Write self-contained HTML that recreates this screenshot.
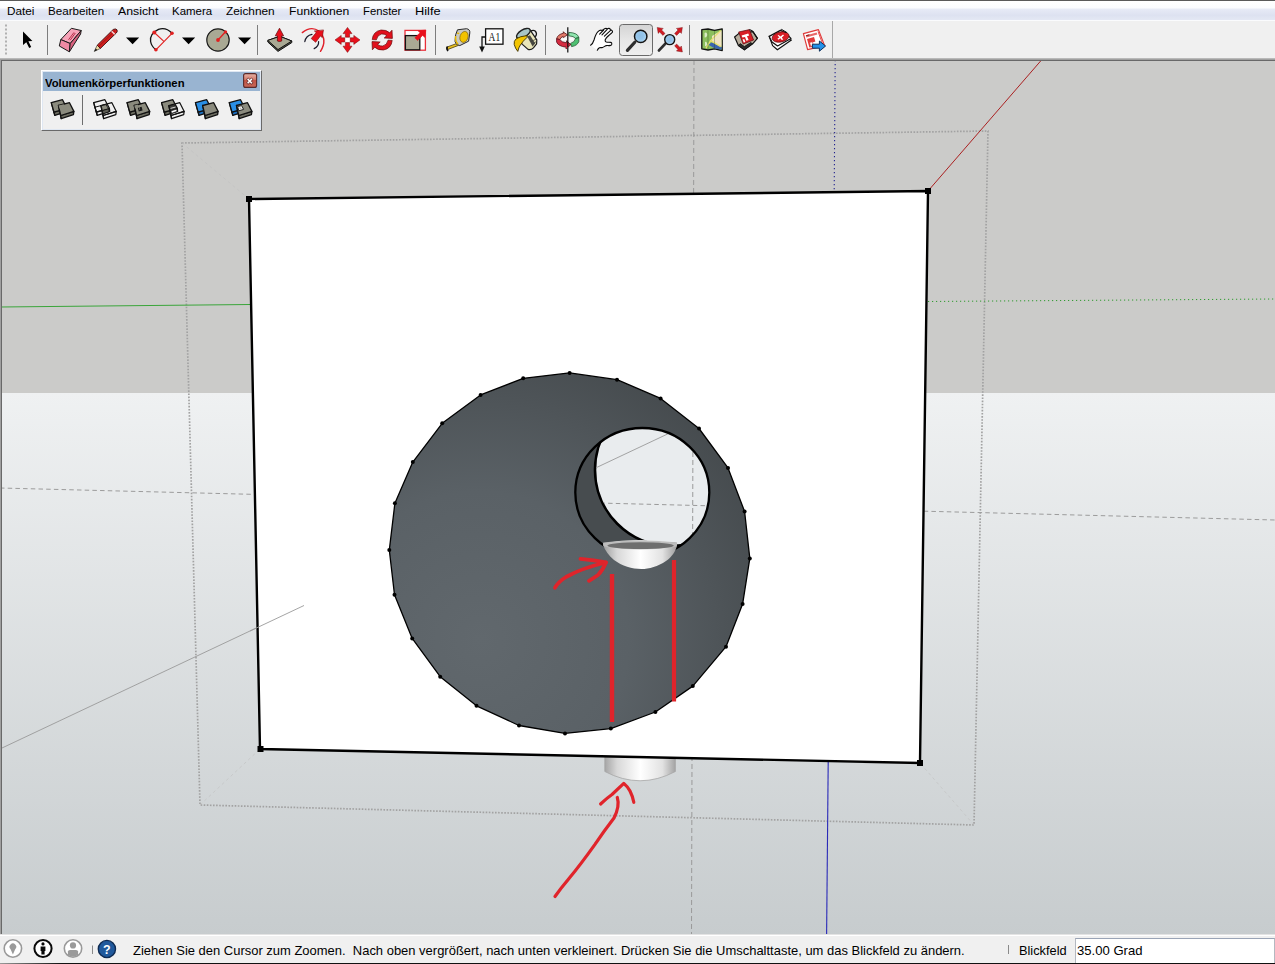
<!DOCTYPE html>
<html lang="de">
<head>
<meta charset="utf-8">
<title>SketchUp</title>
<style>
html,body{margin:0;padding:0;}
body{width:1275px;height:964px;overflow:hidden;position:relative;background:#f0f0f0;font-family:"Liberation Sans",sans-serif;font-size:12px;color:#000;}
.abs{position:absolute;}
#topline{left:0;top:0;width:1275px;height:1px;background:#5a5a5a;}
#menubar{left:0;top:1px;width:1275px;height:19px;background:linear-gradient(#ffffff 0,#fbfcfe 35%,#e6eaf6 45%,#dde2f1 75%,#e4e8f4 100%);}
#menubar span{position:absolute;top:3.4px;font-size:11.5px;line-height:14px;white-space:nowrap;color:#000;display:inline-block;transform-origin:0 0;}
#menuline{left:0;top:20px;width:1275px;height:1px;background:#fafbfd;}
#toolbar{left:0;top:21px;width:1275px;height:36px;background:#f0f0f0;}
#tbshadow{left:0;top:58px;width:1275px;height:3px;background:linear-gradient(#b9b9b9 0,#b9b9b9 33%,#a0a0a0 33%,#a0a0a0 66%,#696969 66%);}
#canvas{left:0;top:61px;width:1275px;height:873px;}
#statusbar{left:0;top:935px;width:1275px;height:28px;background:#f0f0f0;}
#statusbar .t{position:absolute;top:7.8px;font-size:13px;line-height:15px;white-space:pre;transform-origin:0 0;display:inline-block;}
</style>
</head>
<body>
<div id="topline" class="abs"></div>
<div id="menubar" class="abs">
<span id="m1" style="left:6.8px;transform:scaleX(1.0201);">Datei</span>
<span id="m2" style="left:47.8px;transform:scaleX(1.0102);">Bearbeiten</span>
<span id="m3" style="left:117.9px;transform:scaleX(1.0710);">Ansicht</span>
<span id="m4" style="left:172.2px;transform:scaleX(0.9955);">Kamera</span>
<span id="m5" style="left:226.2px;transform:scaleX(1.0294);">Zeichnen</span>
<span id="m6" style="left:288.8px;transform:scaleX(1.0578);">Funktionen</span>
<span id="m7" style="left:362.9px;transform:scaleX(0.9846);">Fenster</span>
<span id="m8" style="left:415.2px;transform:scaleX(1.1121);">Hilfe</span>
</div>
<div id="menuline" class="abs"></div>
<div class="abs" style="left:0;top:21px;width:1275px;height:37px;background:#f0f0f0"></div>
<div id="toolbar" class="abs" style="top:20px;height:40px;background:none">
<!--TB1-->
<svg class="abs" style="left:0;top:0" width="1275" height="40" viewBox="0 20 1275 40">
<defs>
<linearGradient id="zb" x1="0" y1="0" x2="0" y2="1"><stop offset="0" stop-color="#d4d4d4"/><stop offset="0.5" stop-color="#e6e6e6"/><stop offset="1" stop-color="#efefef"/></linearGradient>
<radialGradient id="lens" cx="0.45" cy="0.45" r="0.6"><stop offset="0" stop-color="#8fbfe4"/><stop offset="0.45" stop-color="#93c4ea"/><stop offset="1" stop-color="#b5daf3"/></radialGradient>
</defs>
<!-- grip -->
<g fill="#b0b0b0"><rect x="5" y="24.5" width="2" height="2"/><rect x="5" y="28.5" width="2" height="2"/><rect x="5" y="32.5" width="2" height="2"/><rect x="5" y="36.5" width="2" height="2"/><rect x="5" y="40.5" width="2" height="2"/><rect x="5" y="44.5" width="2" height="2"/><rect x="5" y="48.5" width="2" height="2"/><rect x="5" y="52.5" width="2" height="2"/></g>
<!-- separators -->
<g stroke="#7d7d7d" stroke-width="1"><path d="M47.5,25V55M257.5,25V55M435.5,25V55M545.5,25V55M689.5,25V55"/></g>
<path d="M832.5,21V58" stroke="#a8a8a8" stroke-width="1"/>
<!-- select arrow -->
<path d="M23,31.6 L23,45 L26.3,42.2 L29.2,48 L31.2,47 L28.4,41.3 L32.4,41 Z" fill="#000"/>
<!-- eraser -->
<g stroke="#1a1a1a" stroke-width="1" stroke-linejoin="round">
<path d="M60.8,39.6 L71.4,28.3 L81.2,30.5 L70.2,43.5 Z" fill="#f6a3b8"/>
<path d="M60.8,39.6 L70.2,43.5 L69.4,51.8 L59.3,46 Z" fill="#f08aa4"/>
<path d="M70.2,43.5 L81.2,30.5 L80.6,34 L69.4,51.8 Z" fill="#d8607e"/>
</g>
<path d="M68.5,39.8 L74,32.4 M70.2,40.2 L75.3,33 " stroke="#b0203c" stroke-width="0.9"/>
<!-- pencil -->
<g stroke-linejoin="round">
<path d="M94.3,51.4 L97.2,45.2 L100.4,48.4 Z" fill="#f2dca4" stroke="#222" stroke-width="0.6"/>
<path d="M94.3,51.4 L95.7,48.6 L97.3,50.1 Z" fill="#111"/>
<path d="M97.2,45.2 L113.2,29.5 Q115.6,28.2 117,29.8 Q117.8,31.6 116.3,33 L100.4,48.4 Z" fill="#d21f1f" stroke="#3a1010" stroke-width="0.9"/>
<path d="M98.6,46.6 L114.8,30.8" stroke="#8e1010" stroke-width="0.8"/>
<path d="M111.7,31.2 L114.7,34.3" stroke="#f7d4d4" stroke-width="1.6"/>
</g>
<!-- dropdown triangles -->
<path d="M126,37.4H139.2L132.6,44.2Z M182,37.4H195.2L188.6,44.2Z M238,37.4H251.2L244.6,44.2Z" fill="#000"/>
<!-- arc tool -->
<path d="M172,33.3 Q166,26.8 158.5,29.3 Q149.5,33.5 150.6,41.5 Q151.5,46.5 155.9,49.8" fill="none" stroke="#111" stroke-width="1.3"/>
<path d="M172,33.3 L155.9,49.8 M154.3,32.5 L163.6,41.2" stroke="#e02020" stroke-width="1.1" fill="none"/>
<g fill="#e02020"><circle cx="154.3" cy="32.5" r="2"/><circle cx="172" cy="33.3" r="1.8"/><circle cx="155.9" cy="49.8" r="1.8"/></g>
<!-- circle tool -->
<circle cx="218" cy="40" r="11.2" fill="#a9a994" stroke="#1a1a1a" stroke-width="1.2"/>
<path d="M218,40 L225.5,31.8" stroke="#e02020" stroke-width="1.3"/>
<circle cx="218" cy="40" r="1.9" fill="#e02020"/><circle cx="225.5" cy="31.9" r="1.7" fill="#e02020"/>
<!-- push/pull -->
<g stroke="#111" stroke-width="1" stroke-linejoin="round">
<path d="M267.8,40.4 L279.8,36.3 L291.8,41 L291.8,42.6 L278,51.4 L267.8,42 Z" fill="#55554a"/>
<path d="M267.8,40.4 L279.8,36.3 L291.8,41 L278,49.6 Z" fill="#a9a994"/>
<path d="M279.5,28.2 L283.6,35.8 L281.7,35.8 L281.7,41 Q279.5,42 277.4,41 L277.4,35.8 L275.3,35.8 Z" fill="#e8101c" stroke="#5a0a0a" stroke-width="0.7"/>
</g>
<!-- follow me -->
<g fill="none" stroke-linecap="round">
<path d="M302.3,32.6 Q311,25.5 319,31 Q328,39.5 320.5,51.3" stroke="#e0202a" stroke-width="1.4"/>
<path d="M304.8,41.6 Q306,35.5 312,34.4 M318.6,41.5 Q319,46 314.2,48.6" stroke="#1a1a2a" stroke-width="1.2"/>
<path d="M323.4,30.3 L322.3,37.6 L320.4,36 L315.7,42.3 L311.2,38.6 L316.2,32.6 L314.6,31.2 Z" fill="#e8101c" stroke="#7a0a0a" stroke-width="0.6" stroke-linejoin="round"/>
</g>
<!-- move -->
<g fill="#e8101c" stroke="#7a0a0a" stroke-width="0.5" stroke-linejoin="round">
<path d="M347.5,27.4 L352,33.6 L349.6,33.6 L349.6,37.2 L345.4,37.2 L345.4,33.6 L343,33.6 Z"/>
<path d="M347.5,52.4 L352,46.2 L349.6,46.2 L349.6,42.6 L345.4,42.6 L345.4,46.2 L343,46.2 Z"/>
<path d="M335,39.9 L341.2,35.4 L341.2,37.8 L344.8,37.8 L344.8,42 L341.2,42 L341.2,44.4 Z"/>
<path d="M360,39.9 L353.8,35.4 L353.8,37.8 L350.2,37.8 L350.2,42 L353.8,42 L353.8,44.4 Z"/>
</g>
<rect x="345.6" y="38" width="3.8" height="3.8" fill="#fff"/>
<!-- rotate -->
<g fill="#e2101c" stroke="#6a0a0a" stroke-width="0.7" stroke-linejoin="round">
<path d="M372.2,39.6 Q373,31.5 381,30 Q386.5,29.6 389.6,32.8 L392,30.2 L392.4,38.4 L384.2,38 L386.8,35.6 Q384.4,33.6 381.6,34 Q377.2,35 376.4,39.8 Z"/>
<path d="M392.2,40.4 Q391.4,48.5 383.4,50 Q377.9,50.4 374.8,47.2 L372.4,49.8 L372,41.6 L380.2,42 L377.6,44.4 Q380,46.4 382.8,46 Q387.2,45 388,40.2 Z"/>
</g>
<!-- scale -->
<rect x="405" y="30.4" width="20.4" height="19.8" fill="#fff" stroke="#e8303a" stroke-width="1.3"/>
<rect x="405.4" y="35.6" width="14.4" height="14.2" fill="#a9a994" stroke="#111" stroke-width="1.3"/>
<path d="M425.8,30 L424.8,37.4 L422.6,35.4 L417.6,40.6 L414.8,37.8 L420,32.8 L418,30.8 Z" fill="#e8101c" stroke="#e8101c" stroke-width="0.5" stroke-linejoin="round"/>
</svg>
<!--/TB1-->
<!--TB2-->
<svg class="abs" style="left:0;top:0" width="1275" height="40" viewBox="0 20 1275 40">
<!-- tape measure -->
<g stroke-linejoin="round">
<path d="M446.6,47.2 L457.6,43.2 L458.4,45.4 L447.6,49.6 Z" fill="#e8c020" stroke="#4a3a08" stroke-width="0.8"/>
<path d="M446.4,46.6 Q445.4,48.6 447.2,51.4 L448.6,50.8 Q447.4,48.8 448,46.4 Z" fill="#111"/>
<path d="M457.5,29.8 L466.5,28.7 Q470.3,29.3 469.8,33 L468.6,41.2 L459.8,45.6 Q455.6,45.2 455,41.4 Q455,34 457.5,29.8 Z" fill="#c9c9c4" stroke="#2a2a2a" stroke-width="1"/>
<path d="M455.6,36 Q455.2,41.8 458,44.2 M457.2,33 L459.2,33.6" stroke="#e6b800" stroke-width="1.5" fill="none"/>
<ellipse cx="464" cy="36.9" rx="4" ry="5.6" transform="rotate(18 464 36.9)" fill="#f2c200" stroke="#7a5c00" stroke-width="0.6"/>
</g>
<!-- text tool -->
<rect x="485.6" y="28.8" width="17.4" height="15.4" fill="#fff" stroke="#111" stroke-width="1.3"/>
<text x="488.6" y="41" font-family="Liberation Serif, serif" font-weight="normal" font-size="11.5" fill="#111" textLength="11.6" lengthAdjust="spacingAndGlyphs">A1</text>
<path d="M485.6,37 H482 V48" fill="none" stroke="#111" stroke-width="1.3"/>
<path d="M479.2,46.6 H484.8 L482,52.6 Z" fill="#111"/>
<!-- paint bucket -->
<g stroke-linejoin="round" stroke-linecap="round">
<path d="M530.4,31.6 Q533,29.4 535.4,31.2 Q537.4,33.8 535.6,36.4 L532.6,39.6" fill="none" stroke="#151515" stroke-width="1.3"/>
<path d="M517,37.6 L522.4,44.4 L528,49.4 Q531,50.4 533.4,47.8 L536.6,43.8 L536.8,39.8 L530.2,30.2 Z" fill="#e9e5b9" stroke="#1a1a1a" stroke-width="1.2"/>
<path d="M527.2,36.6 L530,35.2 L535.2,43.4 L532.6,46.4 Z" fill="#4a4a44"/>
<path d="M531.6,41.2 L535.6,39.4 M532.8,43.6 L536.4,41.6" stroke="#3a3a34" stroke-width="0.7" fill="none"/>
<ellipse cx="523.4" cy="33.5" rx="7.7" ry="3.7" transform="rotate(-31 523.4 33.5)" fill="#a9c6c6" stroke="#202020" stroke-width="1.4"/>
<path d="M526.8,35.6 Q520,36.2 516.2,38.8 Q513.6,41 514.2,44.4 Q515.2,48.4 517.8,51.4 Q518.6,47.6 520.4,45 Q522.8,41.2 526.8,37.6 Z" fill="#f2c400" stroke="#3c3000" stroke-width="0.9"/>
</g>
<!-- orbit -->
<g stroke-linejoin="round" stroke-width="0.8">
<path d="M556.6,38.8 Q557.6,34.4 563.6,33.2 L563,31.8 L567.4,34.8 L563.4,37.6 L563.2,36.4 Q560.6,37.2 559.8,39.6 Z" fill="#e27a6a" stroke="#5a1414"/>
<path d="M568.8,32.4 Q577.8,32.8 578.8,37.6 L575.6,38.4 Q573.8,36 568.8,35.8 Z" fill="#90e6b0" stroke="#1d5a30"/>
<path d="M578.8,37.6 L578.8,41.6 Q577.4,45.6 571.6,46.6 L570.6,43.4 Q575,42.2 575.6,38.4 Z" fill="#4cc070" stroke="#1d5a30"/>
<path d="M556.6,38.8 L556.6,42 Q558,46.2 566.2,47.2 L566,49 L570.8,44.6 L566.6,40.8 L566.4,42.8 Q561.6,42.4 559.8,39.6 Z" fill="#d42a40" stroke="#5a0c18"/>
<path d="M561,39.4 Q563.4,38 566.4,38.2 L566.4,40 Q563,40.8 561,39.4 Z M569.6,38.2 Q572.6,38 574.4,39 Q573,40.6 569.6,40.6 Z" fill="#fff" stroke="none"/>
</g>
<path d="M567.8,27.3 V52.6" stroke="#0c0c0c" stroke-width="1.2"/>
<path d="M566.2,47.2 L566,49 L568,47" fill="#d42a40" stroke="none"/>
<!-- pan hand -->
<path d="M590.6,45.2 C592.4,44 593.4,42 594,40 C594.8,37 596,33.6 598,31.6 C599.4,30.2 601,29.8 602.2,30.4 L604.6,28.8 Q606,28 607.2,28.8 L608.4,28.4 Q609.8,28.2 610.4,29.4 L611.6,30.2 Q613,31 612.4,32.4 C610,34.4 607.4,36.4 606,38.4 C604.8,40 604.8,41.4 606.2,42 C607.6,42.4 609.4,42.2 610.8,42.4 C612.2,42.8 612.2,45 610.6,45.4 C609,45.8 607.4,45.4 606.2,45.6 C604.6,46.2 603.8,47 602.6,47.4 C601.4,47.8 600.2,47.4 599.4,47.8 C598.4,48.4 597.8,49.2 597.3,50.2" fill="#fff" stroke="#0c0c0c" stroke-width="1.1" stroke-linejoin="round" stroke-linecap="round"/>
<path d="M603.6,30 L599.6,34.2 M607.2,29.4 L602,34.9 M610.6,30.4 L604.4,36.2" fill="none" stroke="#0c0c0c" stroke-width="1.1" stroke-linecap="round"/>
<!-- zoom (selected) -->
<rect x="619.5" y="24.5" width="33" height="31" rx="3" ry="3" fill="url(#zb)" stroke="#6a6a6a" stroke-width="1"/>
<path d="M627.4,50.4 L634.8,42.2" stroke="#2e2e2e" stroke-width="3.2" stroke-linecap="round"/>
<circle cx="640.7" cy="36.4" r="6.2" fill="url(#lens)" stroke="#141414" stroke-width="1.5"/>
<!-- zoom extents -->
<path d="M659,50.4 L665.4,43.6" stroke="#2e2e2e" stroke-width="2.8" stroke-linecap="round"/>
<circle cx="669.7" cy="39.6" r="5" fill="url(#lens)" stroke="#141414" stroke-width="1.4"/>
<g fill="#d01c24" stroke="#6a0c10" stroke-width="0.4" stroke-linejoin="round">
<path d="M657.2,27.4 L663.2,28.4 L661.6,30 L665,33.4 L663,35.4 L659.6,32 L658.2,33.4 Z"/>
<path d="M682.4,27.4 L676.4,28.4 L678,30 L674.6,33.4 L676.6,35.4 L680,32 L681.4,33.4 Z"/>
<path d="M682.4,52 L676.4,51 L678,49.4 L674.6,46 L676.6,44 L680,47.4 L681.4,46 Z"/>
</g>
<!-- add location (map) -->
<g stroke-linejoin="round">
<path d="M701.8,29.6 L708,29 L714.6,30.4 L722.2,28.8 L722.2,50.6 L714.6,48.8 L708,50 L701.8,48.8 Z" fill="#8cbf5e" stroke="#111" stroke-width="1.3"/>
<path d="M712,36 L721.6,30.2 L721.6,47 L712,42 Z" fill="#efe3c4"/>
<path d="M708,44.6 L714.4,48.2 L721.6,49.8 L721.6,47 L712,42.6 Z" fill="#3a64b0"/>
<path d="M704.6,33 Q706.6,31.6 707.4,35 Q706.2,38 704.6,37.4 Z M705,42 Q707,41 707.4,45 L705,46.4 Z" fill="#d9ecc4"/>
<path d="M720.6,30.6 L710.6,40.6 L720.8,46.6 M710.6,40.6 L706,48.2" fill="none" stroke="#e8e070" stroke-width="1.3"/>
<path d="M708,29 V50 M714.6,30.4 V48.8" stroke="#2c4a1c" stroke-width="0.6" opacity="0.6"/>
</g>
<!-- get models -->
<g stroke-linejoin="round">
<path d="M734.6,37 L739,33.4 L753,31.6 L757.4,38.4 L752.6,43.8 L744.4,49.8 L738.4,45.6 Z" fill="#b7ad9c" stroke="#111" stroke-width="1.2"/>
<path d="M738.6,32 L749.4,29.6 L753.6,40 L743.2,44 Z" fill="#d81e26" stroke="#5a0a0e" stroke-width="0.7"/>
<path d="M741.6,35.4 L748.2,33.6 L749.2,35.6 L747,36.2 L748.6,40 L746.4,40.8 L745,37 L742.4,37.6 Z M742.6,39.4 L744.2,39 L745.4,42 L743.8,42.6 Z" fill="#fff"/>
<path d="M738.4,45.6 L744.4,49.8 L752.6,43.8 L750.6,42.6 L744.4,46.6 L740.2,43.6 Z" fill="#2a2a2a" stroke="#111" stroke-width="0.8"/>
<path d="M749.4,29.6 L752.4,31 L757.4,38.4" fill="none" stroke="#111" stroke-width="1.1"/>
</g>
<!-- share model -->
<g stroke-linejoin="round">
<path d="M769.2,36.4 L774.4,42.6 L784.6,38.4 L791.4,40 L777.4,49.8 L772.6,45.6 Z" fill="#fff" stroke="#111" stroke-width="1.2"/>
<path d="M769.2,36.4 L780.4,30.4 L784.6,32.2 L791,38.4 L777.6,46 L772,42 Z" fill="#fff" stroke="#111" stroke-width="1.2"/>
<ellipse cx="780.6" cy="37" rx="8.6" ry="5" transform="rotate(-12 780.6 37)" fill="#d81e26" stroke="#5a0a0e" stroke-width="0.7"/>
<path d="M778.4,35 L780.6,36.4 L783,34.6 L784,35.6 L781.8,37.4 L783.2,39.4 L781.8,40 L780.4,38.2 L778.4,39.8 L777.4,38.8 L779.4,37.2 L777.6,35.8 Z" fill="#fff"/>
<path d="M780.4,30.4 L781.6,29.4 L786.6,32.4 L784.6,32.2" fill="none" stroke="#111" stroke-width="1"/>
</g>
<!-- extension warehouse -->
<g stroke-linejoin="round">
<path d="M803.4,33.6 L818.4,29.6 L824.6,45.6 L807.6,49.6 Z" fill="#fff" stroke="#e03a3a" stroke-width="1.2"/>
<path d="M805.6,35.4 L816.6,32.4 L817.4,34.4 L806.4,37.6 Z" fill="#e86a6a"/>
<path d="M806.2,35.6 L809.4,34.8" stroke="#7a1010" stroke-width="1"/>
<path d="M807,39 L814,37 L815.4,41.6 L811,43 L812.2,47 L809.4,47.6 Z" fill="#e03a3a"/>
<path d="M809.6,42.6 L812.4,41.8 L813.4,45.6 L810.8,46.4 Z" fill="#fff" stroke="#e03a3a" stroke-width="0.6"/>
<path d="M818,31.4 L822.6,44" stroke="#e03a3a" stroke-width="0.9" fill="none"/>
<path d="M812.4,44.2 H819.4 V41 L825.6,46 L819.4,51.2 V48.2 H812.4 Z" fill="#2492ea" stroke="#10305a" stroke-width="1"/>
</g>
</svg>
<!--/TB2-->
</div>
<div id="tbshadow" class="abs"></div>

<!-- 3D VIEWPORT -->
<svg id="canvas" class="abs" width="1275" height="873" viewBox="0 61 1275 873">
<defs>
<linearGradient id="gnd" x1="0" y1="393" x2="0" y2="935" gradientUnits="userSpaceOnUse">
<stop offset="0" stop-color="#eff1f2"/><stop offset="1" stop-color="#c7ccce"/>
</linearGradient>
<radialGradient id="sph" cx="480" cy="640" r="330" gradientUnits="userSpaceOnUse">
<stop offset="0" stop-color="#61686d"/><stop offset="0.45" stop-color="#5a6166"/><stop offset="1" stop-color="#43484b"/>
</radialGradient>
<linearGradient id="cyl" x1="604" y1="0" x2="677" y2="0" gradientUnits="userSpaceOnUse">
<stop offset="0" stop-color="#a2a2a2"/><stop offset="0.18" stop-color="#d8d8d8"/><stop offset="0.5" stop-color="#ffffff"/><stop offset="0.8" stop-color="#e2e2e2"/><stop offset="1" stop-color="#9c9c9c"/>
</linearGradient>
<clipPath id="holeclip"><ellipse cx="642.3" cy="492.5" rx="67" ry="64.5"/></clipPath>
<clipPath id="farclip"><circle cx="671" cy="470" r="75"/></clipPath>
</defs>
<!-- sky + ground -->
<rect x="0" y="60" width="1275" height="333" fill="#cbcbc9"/>
<rect x="0" y="393" width="1275" height="542" fill="url(#gnd)"/>
<!-- guides behind -->
<g id="guides" fill="none">
<path d="M182,143 L988,131 L974,825 L200,805 Z" stroke="#a2a2a2" stroke-width="1.7" stroke-dasharray="1.6 1.5"/>
<path d="M182,143 L249,199 M200,805 L260,749 M974,825 L920,763" stroke="#c0c0c0" stroke-width="1" stroke-dasharray="3 3" opacity="0.6"/>
<path d="M694,60 L691.5,935" stroke="#9a9a9a" stroke-width="1" stroke-dasharray="5 3"/>
<path d="M0,488 L1275,520" stroke="#9c9c9c" stroke-width="1" stroke-dasharray="4.5 3.2"/>
<path d="M2,748 L304,605.5" stroke="#9a9a9a" stroke-width="0.9"/>
<path d="M0,307 L250,304.5" stroke="#3aa53a" stroke-width="1"/>
<path d="M928,301.5 L1275,299" stroke="#2f9a2f" stroke-width="1" stroke-dasharray="1.2 2.8"/>
<path d="M835.2,60 L834.2,191" stroke="#22228e" stroke-width="1.1" stroke-dasharray="1.2 2.8"/>
<path d="M828.2,762 L826.6,935" stroke="#2a2ab8" stroke-width="1.1"/>
<path d="M928,191 L1041.5,60" stroke="#aa2020" stroke-width="1"/>
</g>
<!-- lower cylinder -->
<path d="M604.8,755 L604.8,771.5 Q640,790 675.4,771.5 L675.4,755 Z" fill="url(#cyl)" stroke="#a6a6a6" stroke-width="0.8"/>
<!-- white panel -->
<path id="panel" d="M249,199 L928,191 L920,763 L260,749 Z" fill="#ffffff" stroke="#000" stroke-width="2.4" stroke-linejoin="miter"/>
<g fill="#000"><rect x="246" y="196" width="6" height="6"/><rect x="925" y="188" width="6" height="6"/><rect x="917" y="760" width="6" height="6"/><rect x="257.5" y="746" width="6" height="6"/></g>
<path d="M250,631 L304,605.5" stroke="#9a9a9a" stroke-width="0.9" fill="none"/>
<!-- sphere -->
<path id="sphere" d="M569.6,372.9 L617,379.7 L660.6,398.4 L699,428.5 L728,467.9 L744.6,511.5 L749.8,558.4 L742.6,604.1 L726,646.7 L692.8,686.1 L655.4,712 L610.8,728.6 L565,733.4 L519,725.5 L476.5,705.8 L440.2,676.7 L412.2,638.4 L394.5,594.8 L389.3,550 L394.9,503.2 L412.8,462.1 L442.2,423.3 L480.6,394.9 L523.2,378.3 Z" fill="url(#sph)" stroke="#000" stroke-width="1.3" stroke-linejoin="round"/>
<g fill="#000"><circle cx="569.6" cy="372.9" r="2"/><circle cx="617" cy="379.7" r="2"/><circle cx="660.6" cy="398.4" r="2"/><circle cx="699" cy="428.5" r="2"/><circle cx="728" cy="467.9" r="2"/><circle cx="744.6" cy="511.5" r="2"/><circle cx="749.8" cy="558.4" r="2"/><circle cx="742.6" cy="604.1" r="2"/><circle cx="726" cy="646.7" r="2"/><circle cx="692.8" cy="686.1" r="2"/><circle cx="655.4" cy="712" r="2"/><circle cx="610.8" cy="728.6" r="2"/><circle cx="565" cy="733.4" r="2"/><circle cx="519" cy="725.5" r="2"/><circle cx="476.5" cy="705.8" r="2"/><circle cx="440.2" cy="676.7" r="2"/><circle cx="412.2" cy="638.4" r="2"/><circle cx="394.5" cy="594.8" r="2"/><circle cx="389.3" cy="550" r="2"/><circle cx="394.9" cy="503.2" r="2"/><circle cx="412.8" cy="462.1" r="2"/><circle cx="442.2" cy="423.3" r="2"/><circle cx="480.6" cy="394.9" r="2"/><circle cx="523.2" cy="378.3" r="2"/></g>
<!-- hole -->
<ellipse cx="642.3" cy="492.5" rx="67" ry="64.5" fill="#474c4f"/>
<g clip-path="url(#holeclip)">
<circle cx="671" cy="470" r="76" fill="#e9ecee" stroke="#000" stroke-width="2.6"/>
<g fill="none" stroke="#9a9a9a" stroke-width="1" clip-path="url(#farclip)">
<path d="M694,60 L691.5,935" stroke-dasharray="5 3"/>
<path d="M0,488 L1275,520" stroke-dasharray="4.5 3.2"/>
<path d="M2,748 L700,418.7" stroke-width="0.9"/>
</g>
</g>
<ellipse cx="642.3" cy="492.5" rx="67" ry="64.5" fill="none" stroke="#000" stroke-width="2.3"/>
<!-- dish -->
<path d="M603.2,542.6 Q640,537.4 676.9,542.6 L676.9,546 C675.5,551 672,557 666,561 C658,566.5 649,569 641.5,569 C632,569 622,566 614,560 C608.5,555.5 605,550 603.2,545.5 Z" fill="url(#cyl)"/>
<path d="M603.2,543 Q640,537.6 676.9,543 Q677.4,545 676.4,546.6 Q640,552.5 604,546.6 Q602.8,545 603.2,543 Z" fill="#bdbdbd"/>
<ellipse cx="640.6" cy="545.6" rx="33.2" ry="3.4" fill="#6e6e6e"/>
<!-- red annotations -->
<g fill="none" stroke="#e0242b" stroke-linecap="round" stroke-linejoin="round">
<path d="M612,574 L612,722" stroke-width="4.4" stroke-linecap="butt"/>
<path d="M674,560 L674,701.5" stroke-width="4.2" stroke-linecap="butt"/>
<path d="M555,587.7 Q558,582 566,577 Q582,568 606,562.5" stroke-width="3.8"/>
<path d="M580.5,558.8 Q594,560 606,562.3 Q603,570 598,575 Q593,578.5 589,580.8" stroke-width="3.8"/>
<path d="M555,896.5 Q561,888 569,878.5 Q581,864 594.8,844.6 Q604,831 614,818 Q620,806 617.3,797.5" stroke-width="3.2"/>
<path d="M600.6,804 Q607,798 612,794.5 Q620,787 623.8,783.4 Q628,787 630,791 Q633,797 633.8,802.3" stroke-width="3.2"/>
</g>
</svg>

<div class="abs" style="left:0;top:59px;width:1px;height:876px;background:#a0a0a0"></div>
<div class="abs" style="left:1px;top:60px;width:1px;height:874px;background:#696969"></div>
<div class="abs" style="left:0;top:934px;width:1275px;height:1px;background:#e3e3e3"></div>
<div class="abs" style="left:0;top:935px;width:1275px;height:1px;background:#ffffff;z-index:5"></div>
<div class="abs" style="left:0;top:963px;width:1275px;height:1px;background:linear-gradient(90deg,#9a9a9a 0,#555 30px,#111 62px,#111 100%)"></div>
<!-- floating palette -->
<div id="palette" class="abs" style="left:41px;top:70px;width:221px;height:61px;background:#f0f0f0;">
<div class="abs" style="left:0;top:0;width:220px;height:60px;border:1px solid #fff;border-right-color:#696969;border-bottom-color:#696969;box-sizing:content-box;width:219px;height:59px;"></div>
<div class="abs" style="left:1px;top:1px;width:217px;height:57px;border:1px solid #dfe7f2;"></div>
<div class="abs" style="left:2px;top:2px;width:217px;height:19px;background:#99b4d1;"></div>
<span id="ptitle" class="abs" style="left:4.3px;top:7px;font-size:10.7px;line-height:13px;font-weight:bold;color:#000;white-space:nowrap;transform-origin:0 0;display:inline-block;transform:scaleX(1.0553);">Volumenkörperfunktionen</span>
<svg class="abs" style="left:0;top:0" width="221" height="61" viewBox="41 70 221 61">
<path d="M82.5,95 V125" stroke="#6e6e6e" stroke-width="1"/>
<g transform="translate(51,99.4)"><path d="M0.3,3.2 L3,12.8 L3.8,16 L1.2,6.6 Z" fill="#6b6b5f" stroke="#111" stroke-width="1.3" stroke-linejoin="round"/><path d="M3,12.8 L16,9 L16.3,12 L3.8,16 Z" fill="#6b6b5f" stroke="#111" stroke-width="1.3" stroke-linejoin="round"/><path d="M0.3,3.2 L11.5,0.3 L16,9 L3,12.8 Z" fill="#8b8b7e" stroke="#111" stroke-width="1.3" stroke-linejoin="round"/><path d="M7.5,6.1 L9.7,16.1 L10.2,19.2 L8.2,9.4 Z" fill="#6b6b5f" stroke="#111" stroke-width="1.3" stroke-linejoin="round"/><path d="M9.7,16.1 L22.9,12 L22.4,15.2 L10.2,19.2 Z" fill="#6b6b5f" stroke="#111" stroke-width="1.3" stroke-linejoin="round"/><path d="M7.5,6.1 L18.5,3.3 L22.9,12 L9.7,16.1 Z" fill="#8b8b7e" stroke="#111" stroke-width="1.3" stroke-linejoin="round"/><path d="M7.5,6.1 L12.6,4.8 L16,9 L9.4,11" fill="#8b8b7e" stroke="none"/></g>
<g transform="translate(93.4,99.4)"><path d="M0.3,3.2 L3,12.8 L3.8,16 L1.2,6.6 Z" fill="none" stroke="#111" stroke-width="1.2" stroke-linejoin="round"/><path d="M3,12.8 L16,9 L16.3,12 L3.8,16 Z" fill="none" stroke="#111" stroke-width="1.2" stroke-linejoin="round"/><path d="M0.3,3.2 L11.5,0.3 L16,9 L3,12.8 Z" fill="none" stroke="#111" stroke-width="1.2" stroke-linejoin="round"/><path d="M1.6,7.8 L13.6,4.6 M0.8,5.6 L3.4,14.4" stroke="#111" stroke-width="1" fill="none"/><path d="M7.5,6.1 L9.7,16.1 L10.2,19.2 L8.2,9.4 Z" fill="none" stroke="#111" stroke-width="1.2" stroke-linejoin="round"/><path d="M9.7,16.1 L22.9,12 L22.4,15.2 L10.2,19.2 Z" fill="none" stroke="#111" stroke-width="1.2" stroke-linejoin="round"/><path d="M7.5,6.1 L18.5,3.3 L22.9,12 L9.7,16.1 Z" fill="none" stroke="#111" stroke-width="1.2" stroke-linejoin="round"/><path d="M7.8,6.4 L12.6,5.2 L15.2,9.4 L9,11.2 Z" fill="#8b8b7e" stroke="#111" stroke-width="0.9"/><path d="M9,11.2 L15.2,9.4 L15.6,12.4 L9.6,14.4 Z" fill="#5f5f55" stroke="#111" stroke-width="0.9"/></g>
<g transform="translate(126.8,99.4)"><path d="M0.3,3.2 L3,12.8 L3.8,16 L1.2,6.6 Z" fill="#6b6b5f" stroke="#111" stroke-width="1.3" stroke-linejoin="round"/><path d="M3,12.8 L16,9 L16.3,12 L3.8,16 Z" fill="#6b6b5f" stroke="#111" stroke-width="1.3" stroke-linejoin="round"/><path d="M0.3,3.2 L11.5,0.3 L16,9 L3,12.8 Z" fill="#8b8b7e" stroke="#111" stroke-width="1.3" stroke-linejoin="round"/><path d="M7.5,6.1 L9.7,16.1 L10.2,19.2 L8.2,9.4 Z" fill="#6b6b5f" stroke="#111" stroke-width="1.3" stroke-linejoin="round"/><path d="M9.7,16.1 L22.9,12 L22.4,15.2 L10.2,19.2 Z" fill="#6b6b5f" stroke="#111" stroke-width="1.3" stroke-linejoin="round"/><path d="M7.5,6.1 L18.5,3.3 L22.9,12 L9.7,16.1 Z" fill="#8b8b7e" stroke="#111" stroke-width="1.3" stroke-linejoin="round"/><path d="M11.6,8.2 L12.4,11.4 L15,10.6 L14.2,7.6 M13.4,7.8 L14,10.6" stroke="#1a1a1a" stroke-width="1.3" fill="none"/><path d="M7.5,6.1 L11,5.2 L11.8,8 L8.2,9 Z" fill="#8b8b7e" stroke="none"/></g>
<g transform="translate(161.3,99.4)"><path d="M0.3,3.2 L3,12.8 L3.8,16 L1.2,6.6 Z" fill="#6b6b5f" stroke="#111" stroke-width="1.3" stroke-linejoin="round"/><path d="M3,12.8 L16,9 L16.3,12 L3.8,16 Z" fill="#6b6b5f" stroke="#111" stroke-width="1.3" stroke-linejoin="round"/><path d="M0.3,3.2 L11.5,0.3 L16,9 L3,12.8 Z" fill="#8b8b7e" stroke="#111" stroke-width="1.3" stroke-linejoin="round"/><path d="M7.5,6.1 L9.7,16.1 L10.2,19.2 L8.2,9.4 Z" fill="none" stroke="#111" stroke-width="1.2" stroke-linejoin="round"/><path d="M9.7,16.1 L22.9,12 L22.4,15.2 L10.2,19.2 Z" fill="none" stroke="#111" stroke-width="1.2" stroke-linejoin="round"/><path d="M7.5,6.1 L18.5,3.3 L22.9,12 L9.7,16.1 Z" fill="none" stroke="#111" stroke-width="1.2" stroke-linejoin="round"/><path d="M7.8,6.4 L12.8,5.1 L15.6,9.3 L9.2,11.2 Z" fill="#3a3a36" stroke="#111" stroke-width="0.9"/><path d="M9.6,11.4 L15.4,9.6 L15.8,12 L10.2,14 Z" fill="#fff" stroke="#111" stroke-width="0.8"/><path d="M9.2,9 L14.4,7.6" stroke="#fff" stroke-width="0.8"/></g>
<g transform="translate(195.2,99.4)"><path d="M0.3,3.2 L3,12.8 L3.8,16 L1.2,6.6 Z" fill="#1c6fc0" stroke="#111" stroke-width="1.3" stroke-linejoin="round"/><path d="M3,12.8 L16,9 L16.3,12 L3.8,16 Z" fill="#1c6fc0" stroke="#111" stroke-width="1.3" stroke-linejoin="round"/><path d="M0.3,3.2 L11.5,0.3 L16,9 L3,12.8 Z" fill="#2a8fe6" stroke="#111" stroke-width="1.3" stroke-linejoin="round"/><path d="M7.5,6.1 L9.7,16.1 L10.2,19.2 L8.2,9.4 Z" fill="#6b6b5f" stroke="#111" stroke-width="1.3" stroke-linejoin="round"/><path d="M9.7,16.1 L22.9,12 L22.4,15.2 L10.2,19.2 Z" fill="#6b6b5f" stroke="#111" stroke-width="1.3" stroke-linejoin="round"/><path d="M7.5,6.1 L18.5,3.3 L22.9,12 L9.7,16.1 Z" fill="#8b8b7e" stroke="#111" stroke-width="1.3" stroke-linejoin="round"/></g>
<g transform="translate(229,99.4)"><path d="M0.3,3.2 L3,12.8 L3.8,16 L1.2,6.6 Z" fill="#1c6fc0" stroke="#111" stroke-width="1.3" stroke-linejoin="round"/><path d="M3,12.8 L16,9 L16.3,12 L3.8,16 Z" fill="#1c6fc0" stroke="#111" stroke-width="1.3" stroke-linejoin="round"/><path d="M0.3,3.2 L11.5,0.3 L16,9 L3,12.8 Z" fill="#2a8fe6" stroke="#111" stroke-width="1.3" stroke-linejoin="round"/><path d="M7.5,6.1 L9.7,16.1 L10.2,19.2 L8.2,9.4 Z" fill="#6b6b5f" stroke="#111" stroke-width="1.3" stroke-linejoin="round"/><path d="M9.7,16.1 L22.9,12 L22.4,15.2 L10.2,19.2 Z" fill="#6b6b5f" stroke="#111" stroke-width="1.3" stroke-linejoin="round"/><path d="M7.5,6.1 L18.5,3.3 L22.9,12 L9.7,16.1 Z" fill="#8b8b7e" stroke="#111" stroke-width="1.3" stroke-linejoin="round"/><path d="M8.6,7.2 L12.6,6.2 L14.6,10 L9.8,11.4 Z" fill="#f4f4f4" stroke="#111" stroke-width="0.9"/><path d="M10.6,8.4 L12,8 L12.6,9.4 L11,9.8 Z" fill="#b8b8b0"/></g>
<defs><linearGradient id="cb" x1="0" y1="0" x2="0" y2="1"><stop offset="0" stop-color="#e8b4a8"/><stop offset="0.45" stop-color="#d07868"/><stop offset="0.5" stop-color="#c25444"/><stop offset="1" stop-color="#c86858"/></linearGradient></defs>
<rect x="243.6" y="73.6" width="13" height="13.8" rx="2" ry="2" fill="url(#cb)" stroke="#5a2a2a" stroke-width="1.1"/>
<path d="M248.2,79.5 L251.4,82.7 M251.4,79.5 L248.2,82.7" stroke="#6a3030" stroke-width="2.9" stroke-linecap="square"/>
<path d="M248.2,79.5 L251.4,82.7 M251.4,79.5 L248.2,82.7" stroke="#fff" stroke-width="1.6" stroke-linecap="square"/>
</svg>
</div>
<!-- /palette -->
<div id="statusbar" class="abs">
<svg class="abs" style="left:0;top:0" width="130" height="29" viewBox="0 935 130 29">
<circle cx="12.9" cy="948.5" r="8.7" fill="#fff" stroke="#9a9a9a" stroke-width="1.6"/>
<path d="M12.9,954.4 L10.6,949.2 A3.3,3.3 0 1 1 15.2,949.2 Z" fill="#9a9a9a"/>
<circle cx="43" cy="948.5" r="8.6" fill="#fff" stroke="#0a0a0a" stroke-width="2"/>
<circle cx="43" cy="943.9" r="1.6" fill="#0a0a0a"/>
<path d="M40.6,946.4 H45.4 V951 H44.6 V954.6 H41.4 V951 H40.6 Z" fill="#0a0a0a"/>
<circle cx="73" cy="948.5" r="8.7" fill="#fff" stroke="#9a9a9a" stroke-width="1.6"/>
<circle cx="73" cy="945.4" r="3.1" fill="#9a9a9a"/>
<path d="M67.9,955 V951.6 Q68,950 70,950 H76 Q78,950 78.1,951.6 V955 Q73,958.4 67.9,955 Z" fill="#9a9a9a"/>
<path d="M92.5,945.5 V954" stroke="#8a8a8a" stroke-width="1"/>
<circle cx="106.9" cy="949" r="8.6" fill="#20599c" stroke="#0e2a52" stroke-width="1.4"/>
<text x="106.9" y="953.6" text-anchor="middle" font-family="Liberation Sans, sans-serif" font-weight="bold" font-size="12.5" fill="#fff">?</text>
</svg>
<div class="abs" style="left:1008px;top:10px;width:1px;height:9px;background:#8a8a8a"></div>
<span class="t" id="s1" style="left:132.5px;transform:scaleX(0.9974);">Ziehen Sie den Cursor zum Zoomen.  Nach oben vergrößert, nach unten verkleinert. Drücken Sie die Umschalttaste, um das Blickfeld zu ändern.</span>
<span class="t" id="s2" style="left:1018.6px;transform:scaleX(0.9831);">Blickfeld</span>
<div class="abs" style="left:1075px;top:3px;width:200px;height:25px;background:#fff;border:1px solid #b4b8c0;border-top-color:#9aa4b6;border-bottom:none;box-sizing:border-box;"></div>
<span class="t" id="s3" style="left:1077.3px;transform:scaleX(1.0069);">35.00 Grad</span>
</div>
</body>
</html>
